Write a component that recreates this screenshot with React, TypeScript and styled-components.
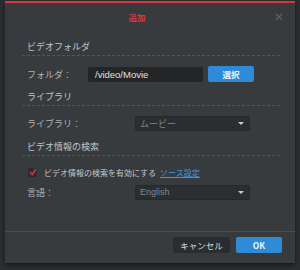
import React from "react";
import styled, { createGlobalStyle } from "styled-components";

const Global = createGlobalStyle`
  html, body { margin: 0; padding: 0; }
  body {
    width: 300px; height: 270px; overflow: hidden;
    background: #2b2e30;
    font-family: "Noto Sans CJK JP", "Liberation Sans", sans-serif;
  }
`;

const Stage = styled.div`
  width: 300px; height: 270px;
  padding: 1px 5px 0 5px;
  box-sizing: border-box;
`;

const Dialog = styled.div`
  width: 290px; height: 262px;
  box-sizing: border-box;
  background: #383b3e;
  border-top: 2px solid #d8363d;
  display: flex; flex-direction: column;
  box-shadow: 0 2px 4px rgba(0,0,0,0.5);
`;

const Header = styled.div`
  height: 28px; display: flex; align-items: center;
`;

const Title = styled.div`
  flex: 1; text-align: center; color: #d23a40; font-size: 8.5px; font-weight: bold;
`;

const Close = styled.div`
  width: 26px; height: 28px; display: flex; align-items: center; justify-content: center;
  padding-right: 6px; box-sizing: border-box;
`;

const Body = styled.div`
  flex: 1; padding: 8px 15px 0 17px; display: flex; flex-direction: column;
`;

const SectionTitle = styled.div<{ $mt: number }>`
  margin-top: ${p => p.$mt}px;
  height: 16px; line-height: 16px;
  padding-left: 5px;
  color: #c3c5c7; font-size: 9px;
  border-bottom: 1px dashed #52565a;
`;

const Row = styled.div<{ $mt: number }>`
  margin-top: ${p => p.$mt}px;
  height: 16px; display: flex; align-items: center;
  padding-left: 5px;
`;

const Label = styled.div<{ $w: number }>`
  width: ${p => p.$w}px; color: #b0b3b5; font-size: 9px;
`;

const Input = styled.div`
  width: 115px; height: 15px; box-sizing: border-box;
  background: #232527; border-radius: 2px;
  padding-left: 7px; display: flex; align-items: center;
  color: #e0e0e0; font-family: "Liberation Sans", sans-serif; font-size: 9.5px;
`;

const Gap = styled.div`
  width: 5px;
`;

const Button = styled.div<{ $primary?: boolean; $w: number }>`
  width: ${p => p.$w}px; height: 16px; box-sizing: border-box;
  border-radius: 2px;
  background: ${p => (p.$primary ? "#2f8bd7" : "#2a2d30")};
  color: ${p => (p.$primary ? "#eaf3fb" : "#dcdcdc")};
  font-size: 8.5px; display: flex; align-items: center; justify-content: center;
  font-weight: ${p => (p.$primary ? "bold" : "normal")};
`;

const Select = styled.div`
  width: 115px; height: 15px; box-sizing: border-box;
  background: #2b2e31; border: 1px solid #26282b; border-radius: 2px;
  padding: 0 5px 0 4px; display: flex; align-items: center; justify-content: space-between;
  color: #80858a; font-size: 9px; font-family: "Liberation Sans", "Noto Sans CJK JP", sans-serif;
`;

const Caret = styled.span`
  width: 0; height: 0;
  border-left: 3px solid transparent; border-right: 3px solid transparent;
  border-top: 3px solid #c8c8c8;
`;

const Check = styled.div`
  width: 9px; height: 9px; background: #2a2d30; border-radius: 1px;
  margin-left: 1px; margin-right: 7px;
  display: flex; align-items: center; justify-content: center;
`;

const CheckText = styled.span`
  color: #c3c5c7; font-size: 8px;
`;

const Link = styled.span`
  color: #3d97e0; font-size: 8px; text-decoration: underline; margin-left: 4px;
`;

const Footer = styled.div`
  height: 26px; border-top: 1px solid #4a4e52;
  display: flex; align-items: center; justify-content: flex-end;
  gap: 6px; padding: 0 13px 5px 0;
`;

export default function App() {
  return (
    <>
      <Global />
      <Stage>
        <Dialog>
          <Header>
            <Title>追加</Title>
            <Close>
              <svg width="8" height="8" viewBox="0 0 8 8">
                <path d="M1 1L7 7M7 1L1 7" stroke="#5e6266" strokeWidth="1.3" />
              </svg>
            </Close>
          </Header>
          <Body>
            <SectionTitle $mt={0}>ビデオフォルダ</SectionTitle>
            <Row $mt={10}>
              <Label $w={61}>フォルダ：</Label>
              <Input>/video/Movie</Input>
              <Gap />
              <Button $primary $w={46}>選択</Button>
            </Row>
            <SectionTitle $mt={7}>ライブラリ</SectionTitle>
            <Row $mt={9}>
              <Label $w={108}>ライブラリ：</Label>
              <Select>ムービー<Caret /></Select>
            </Row>
            <SectionTitle $mt={8}>ビデオ情報の検索</SectionTitle>
            <Row $mt={8}>
              <Check>
                <svg width="8" height="8" viewBox="0 0 8 8">
                  <path d="M1 4L3.2 6.5L7 1" stroke="#d8363d" strokeWidth="1.5" fill="none" />
                </svg>
              </Check>
              <CheckText>ビデオ情報の検索を有効にする</CheckText>
              <Link>ソース設定</Link>
            </Row>
            <Row $mt={4}>
              <Label $w={108}>言語：</Label>
              <Select>English<Caret /></Select>
            </Row>
          </Body>
          <Footer>
            <Button $w={57}>キャンセル</Button>
            <Button $primary $w={46}>OK</Button>
          </Footer>
        </Dialog>
      </Stage>
    </>
  );
}
